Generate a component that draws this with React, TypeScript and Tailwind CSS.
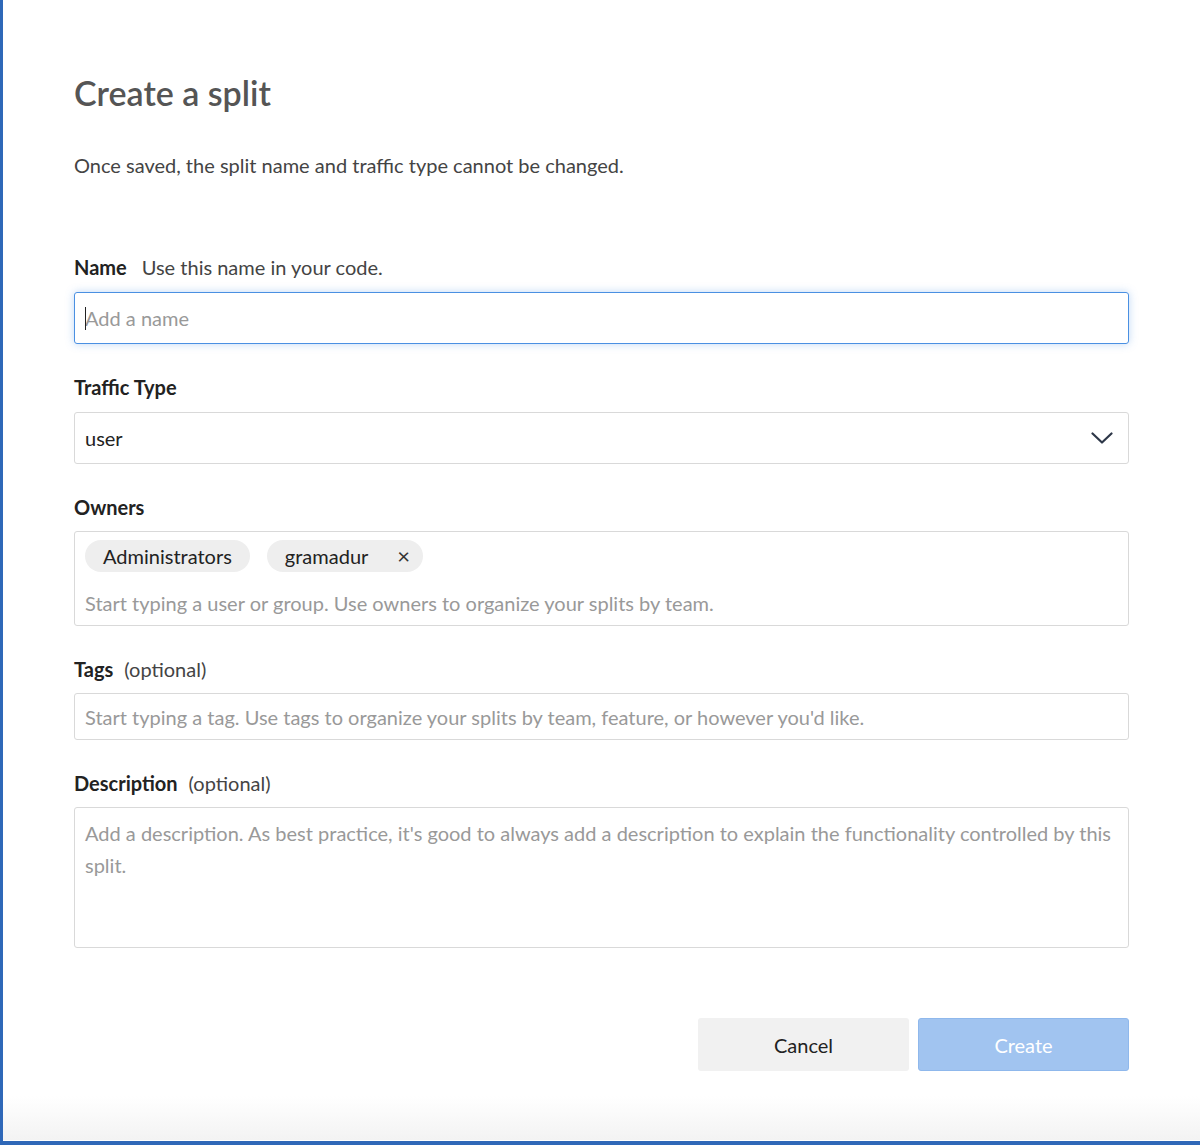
const Chevron = () => (
  <svg width="22" height="12" viewBox="0 0 22 12" fill="none">
    <path d="M1.5 1.5 L11 10.5 L20.5 1.5" stroke="#2d3748" strokeWidth="2.2" strokeLinecap="round" strokeLinejoin="round" />
  </svg>
);

const Label = ({ title, hint, gap = 'ml-[11px]' }: { title: string; hint?: string; gap?: string }) => (
  <div className="text-[20px] leading-[24px] text-[#222]">
    <span className="font-bold">{title}</span>
    {hint && <span className={`${gap} text-[#444]`}>{hint}</span>}
  </div>
);

export default function App() {
  return (
    <div className="w-full h-[1145px] bg-white border-l-[3px] border-b-[4px] border-[#2f68b8] flex flex-col font-['Lato',sans-serif]">
      <div className="flex-1 px-[71px] pt-[73px]">
        <h1 className="text-[34px] leading-[40px] font-semibold text-[#555]">Create a split</h1>
        <p className="mt-[40px] text-[20px] leading-[24px] text-[#444]">
          Once saved, the split name and traffic type cannot be changed.
        </p>

        <div className="mt-[78px]">
          <Label title="Name" hint="Use this name in your code." gap="ml-[15px]" />
          <div className="relative mt-[13px] h-[52px] rounded-[3px] border border-[#4a90e2] shadow-[0_0_8px_rgba(74,144,226,0.35)] flex items-center px-[10px]">
            <span className="absolute left-[10px] top-[14px] h-[23px] w-px bg-[#222]" />
            <span className="text-[20px] text-[#999]">Add a name</span>
          </div>
        </div>

        <div className="mt-[31px]">
          <Label title="Traffic Type" />
          <div className="mt-[13px] h-[52px] rounded-[3px] border border-[#d9d9d9] flex items-center justify-between pl-[10px] pr-[15px]">
            <span className="text-[20px] text-[#222]">user</span>
            <Chevron />
          </div>
        </div>

        <div className="mt-[31px]">
          <Label title="Owners" />
          <div className="mt-[12px] h-[95px] rounded-[3px] border border-[#d9d9d9] px-[10px] pt-[8px]">
            <div className="flex gap-[17px]">
              <span className="h-[32px] rounded-full bg-[#eeeeee] px-[18px] flex items-center text-[20px] text-[#222]">
                Administrators
              </span>
              <span className="h-[32px] rounded-full bg-[#eeeeee] pl-[18px] pr-[13px] flex items-center text-[20px] text-[#222]">
                gramadur
                <span className="ml-[29px] text-[22px] leading-none text-[#333]">×</span>
              </span>
            </div>
            <div className="mt-[19px] text-[20px] leading-[24px] text-[#999]">
              Start typing a user or group. Use owners to organize your splits by team.
            </div>
          </div>
        </div>

        <div className="mt-[31px]">
          <Label title="Tags" hint="(optional)" />
          <div className="mt-[12px] h-[47px] rounded-[3px] border border-[#d9d9d9] flex items-center px-[10px] text-[20px] text-[#999]">
            Start typing a tag. Use tags to organize your splits by team, feature, or however you'd like.
          </div>
        </div>

        <div className="mt-[31px]">
          <Label title="Description" hint="(optional)" />
          <div className="mt-[12px] h-[141px] rounded-[3px] border border-[#d9d9d9] px-[10px] pt-[9px] text-[20px] leading-[32px] text-[#999]">
            Add a description. As best practice, it's good to always add a description to explain the functionality controlled by this
            <br />
            split.
          </div>
        </div>

        <div className="mt-[70px] flex justify-end gap-[9px]">
          <button className="w-[211px] h-[53px] rounded-[3px] bg-[#f1f1f1] text-[20px] text-[#222]">Cancel</button>
          <button className="w-[211px] h-[53px] rounded-[3px] bg-[#a1c4f0] border border-[#8fb8ec] text-[20px] text-white">Create</button>
        </div>
      </div>
      <div className="h-[45px] bg-gradient-to-b from-white to-[#f3f3f3] border-b border-white" />
    </div>
  );
}
